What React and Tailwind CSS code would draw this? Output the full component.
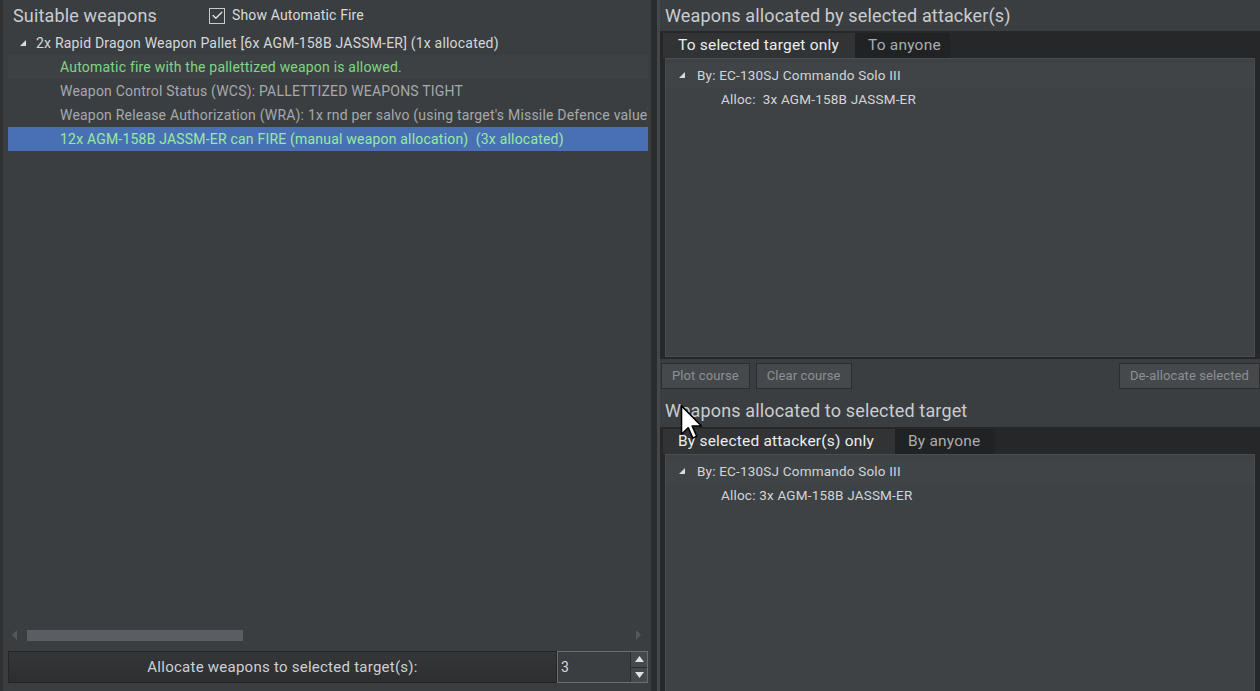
import { Check } from "lucide-react";

const FONT = "font-['Roboto','Liberation_Sans',sans-serif]";

// small solid triangle used by tree nodes (expanded state)
function Expander() {
  return (
    <svg width="8" height="8" viewBox="0 0 8 8" className="shrink-0">
      <path d="M7 1 L7 7 L1 7 Z" fill="#d8dadc" />
    </svg>
  );
}

function Cursor() {
  return (
    <svg
      width="24"
      height="36"
      viewBox="0 0 12 19"
      className="absolute left-[679px] top-[404px]"
    >
      <path
        d="M1 1 L1 16 L4.5 12.5 L7 18 L9 17 L6.6 11.6 L11.5 11.6 Z"
        fill="#ffffff"
        stroke="#000000"
        strokeWidth="0.8"
        strokeLinejoin="round"
      />
    </svg>
  );
}

function TreeRow({ indent, expander, gap = "mr-[9px]", children, className = "" }) {
  return (
    <div className={`flex h-[24px] items-center whitespace-pre ${className}`}>
      <div className={`shrink-0 ${indent}`} />
      {expander && (
        <div className={`shrink-0 ${gap}`}>
          <Expander />
        </div>
      )}
      <span className="shrink-0">{children}</span>
    </div>
  );
}

function TabPanel({ tabs, rows, bodyClass }) {
  return (
    <div className="flex flex-col bg-[#262728] px-[5px] pb-[2px]">
      <div className="flex h-[27px] items-end">
        {tabs.map((t, i) => (
          <div
            key={t.label}
            className={`flex h-[25px] items-center text-[15.5px] tracking-[0.2px] ${t.w} ${
              i === 0
                ? "-ml-[2px] bg-[#313335] pl-[15px] text-[#eceef0]"
                : "bg-[#212223] pl-[13px] text-[#a9adb1]"
            }`}
          >
            {t.label}
          </div>
        ))}
      </div>
      <div className={`border border-[#4a4e52] bg-[#3e4245] ${bodyClass}`}>
        <div className="pt-[4px] text-[13.5px] tracking-[0.2px] text-[#d2d5d8]">
          <TreeRow indent="w-[12px]" expander gap="mr-[11px]" className="bg-[#404447]">
            {rows[0]}
          </TreeRow>
          <TreeRow indent="w-[55px]">{rows[1]}</TreeRow>
        </div>
      </div>
    </div>
  );
}

function Button({ children, className = "" }) {
  return (
    <div
      className={`flex h-[26px] items-center border border-[#2b2d2f] bg-[#45494c] px-[10px] text-[13px] tracking-[0.1px] text-[#8c9094] ${className}`}
    >
      {children}
    </div>
  );
}

export default function App() {
  return (
    <div
      className={`relative flex h-[691px] w-[1260px] overflow-hidden bg-[#3b3e41] ${FONT}`}
    >
      {/* Left: suitable weapons */}
      <div className="flex w-[651px] shrink-0 flex-col border-l-[3px] border-[#2e3032]">
        <div className="flex h-[31px] shrink-0 items-center">
          <span className="pl-[10px] text-[18px] tracking-[0.15px] text-[#c9ccd0]">
            Suitable weapons
          </span>
          <div className="ml-[52px] flex items-center gap-[7px]">
            <div className="flex h-[16px] w-[16px] items-center justify-center border border-[#c8cacc] bg-[#3b3e41]">
              <Check size={13} strokeWidth={2.5} color="#e0e2e4" />
            </div>
            <span className="text-[14px] tracking-[0.15px] text-[#d8dadc]">
              Show Automatic Fire
            </span>
          </div>
        </div>

        <div className="relative flex-1 overflow-hidden pl-[5px] pr-[3px] text-[14px] tracking-[0.2px]">
          <TreeRow indent="w-[11px]" expander className="text-[#d4d7da]">
            2x Rapid Dragon Weapon Pallet [6x AGM-158B JASSM-ER] (1x allocated)
          </TreeRow>
          <TreeRow indent="w-[52px]" className="bg-[#3e4144] text-[#7fd685]">
            Automatic fire with the pallettized weapon is allowed.
          </TreeRow>
          <TreeRow indent="w-[52px]" className="text-[#a6a9ad]">
            Weapon Control Status (WCS): PALLETTIZED WEAPONS TIGHT
          </TreeRow>
          <TreeRow indent="w-[52px]" className="overflow-hidden text-[#a6a9ad]">
            Weapon Release Authorization (WRA): 1x rnd per salvo (using target's Missile Defence value)
          </TreeRow>
          <TreeRow indent="w-[52px]" className="bg-[#4a70b4] text-[#95eba3]">
            12x AGM-158B JASSM-ER can FIRE (manual weapon allocation)  (3x allocated)
          </TreeRow>
        </div>

        {/* horizontal scrollbar */}
        <div className="flex h-[14px] shrink-0 items-center px-[9px]">
          <svg width="6" height="10" viewBox="0 0 6 10">
            <path d="M5 0 L0 5 L5 10 Z" fill="#54585c" />
          </svg>
          <div className="ml-[9px] h-[11px] w-[216px] bg-[#5a5e62]" />
          <div className="flex-1" />
          <svg width="6" height="10" viewBox="0 0 6 10">
            <path d="M0 0 L5 5 L0 10 Z" fill="#54585c" />
          </svg>
        </div>

        {/* allocate bar */}
        <div className="mb-[8px] mt-[9px] flex h-[32px] shrink-0 pl-[5px] pr-[3px]">
          <div className="flex flex-1 items-center justify-center border border-[#252628] bg-gradient-to-b from-[#343638] to-[#2c2e30] text-[15px] tracking-[0.25px] text-[#cdd0d4]">
            Allocate weapons to selected target(s):
          </div>
          <div className="flex w-[91px] border border-[#6a6e72] bg-[#3b3e41]">
            <span className="flex flex-1 items-center pl-[3px] text-[14px] text-[#d8dadc]">3</span>
            <div className="flex w-[17px] flex-col border-l border-[#2a2c2e]">
              <div className="flex flex-1 items-center justify-center border-b border-[#2a2c2e] bg-[#45494c]">
                <svg width="9" height="6" viewBox="0 0 9 6">
                  <path d="M0 6 L4.5 0 L9 6 Z" fill="#dfe1e3" />
                </svg>
              </div>
              <div className="flex flex-1 items-center justify-center bg-[#45494c]">
                <svg width="9" height="6" viewBox="0 0 9 6">
                  <path d="M0 0 L9 0 L4.5 6 Z" fill="#dfe1e3" />
                </svg>
              </div>
            </div>
          </div>
        </div>
      </div>

      {/* splitter */}
      <div className="flex w-[9px] shrink-0">
        <div className="w-[6px] bg-[#2a2c2e]" />
        <div className="w-[3px] bg-[#45484b]" />
      </div>

      {/* Right side */}
      <div className="flex flex-1 flex-col">
        <div className="flex h-[31px] shrink-0 items-center pl-[5px] text-[18px] tracking-[0.15px] text-[#c9ccd0]">
          Weapons allocated by selected attacker(s)
        </div>
        <TabPanel
          tabs={[
            { label: "To selected target only", w: "w-[192px]" },
            { label: "To anyone", w: "w-[95px]" },
          ]}
          rows={["By: EC-130SJ Commando Solo III", "Alloc:  3x AGM-158B JASSM-ER"]}
          bodyClass="h-[299px]"
        />
        <div className="mt-[4px] flex h-[26px] shrink-0 items-center gap-[6px] pl-[1px]">
          <Button>Plot course</Button>
          <Button>Clear course</Button>
          <div className="flex-1" />
          <Button className="px-[5px]">De-allocate selected</Button>
        </div>
        <div className="flex h-[38px] shrink-0 items-center pl-[5px] pt-[4px] text-[18px] tracking-[0.15px] text-[#c9ccd0]">
          Weapons allocated to selected target
        </div>
        <TabPanel
          tabs={[
            { label: "By selected attacker(s) only", w: "w-[232px]" },
            { label: "By anyone", w: "w-[100px]" },
          ]}
          rows={["By: EC-130SJ Commando Solo III", "Alloc: 3x AGM-158B JASSM-ER"]}
          bodyClass="h-[240px]"
        />
      </div>

      <Cursor />
    </div>
  );
}
